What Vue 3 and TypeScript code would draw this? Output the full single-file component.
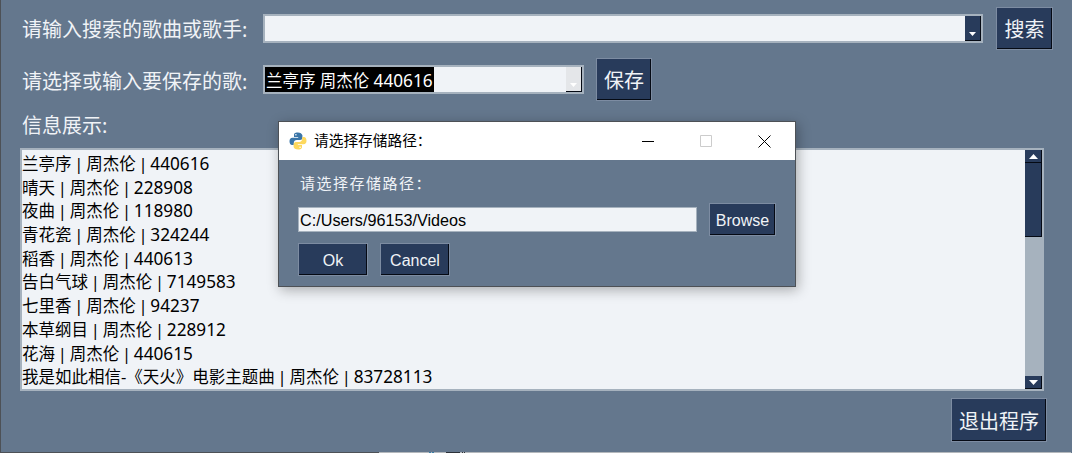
<script setup lang="ts">
interface Song {
  name: string
  singer: string
  id: string
}

const songs: Song[] = [
  { name: '兰亭序', singer: '周杰伦', id: '440616' },
  { name: '晴天', singer: '周杰伦', id: '228908' },
  { name: '夜曲', singer: '周杰伦', id: '118980' },
  { name: '青花瓷', singer: '周杰伦', id: '324244' },
  { name: '稻香', singer: '周杰伦', id: '440613' },
  { name: '告白气球', singer: '周杰伦', id: '7149583' },
  { name: '七里香', singer: '周杰伦', id: '94237' },
  { name: '本草纲目', singer: '周杰伦', id: '228912' },
  { name: '花海', singer: '周杰伦', id: '440615' },
  { name: '我是如此相信-《天火》电影主题曲', singer: '周杰伦', id: '83728113' },
]

// what shows of the window behind, along the bottom edge
const edgeParts = [
  { width: 379, color: '#4d5156' },
  { width: 50, color: '#b4b8bc' },
  { width: 2, color: '#3a7ea8' },
  { width: 1, color: '#b4b8bc' },
  { width: 2, color: '#3a7ea8' },
  { width: 12, color: '#b4b8bc' },
  { width: 14, color: '#2c3138' },
  { width: 2, color: '#b4b8bc' },
  { width: 1, color: '#2c3138' },
  { width: 1, color: '#b4b8bc' },
  { width: 1, color: '#2c3138' },
  { width: 606, color: '#b4b8bc' },
]
</script>

<template>
  <div class="window">
    <div class="row">
      <label class="label">请输入搜索的歌曲或歌手:</label>
      <div class="combo combo-wide">
        <div class="combo-field"></div>
        <div class="combo-arrow">
          <svg width="7" height="4" viewBox="0 0 7 4"><path d="M0 0h7L3.5 4z" fill="#fff" /></svg>
        </div>
      </div>
      <button class="btn btn-search">搜索</button>
    </div>

    <div class="row row-save">
      <label class="label">请选择或输入要保存的歌:</label>
      <div class="combo combo-short">
        <div class="combo-field"><span class="selected">兰亭序 周杰伦 <span class="num">440616</span></span></div>
        <div class="combo-arrow combo-arrow-plain">
          <svg width="7" height="4" viewBox="0 0 7 4"><path d="M0 0h7L3.5 4z" fill="#fff" /></svg>
        </div>
      </div>
      <button class="btn btn-save">保存</button>
    </div>

    <div class="caption">信息展示:</div>

    <div class="listbox">
      <div class="list-lines">
        <div v-for="song in songs" :key="song.id" class="line">
          {{ song.name }} | {{ song.singer }} | <span class="num">{{ song.id }}</span>
        </div>
      </div>
      <div class="scrollbar">
        <div class="scroll-btn">
          <svg width="9" height="5" viewBox="0 0 9 5"><path d="M4.500 0L9 5H0z" fill="#fff" /></svg>
        </div>
        <div class="scroll-thumb"></div>
        <div class="scroll-trough"></div>
        <div class="scroll-btn">
          <svg width="9" height="5" viewBox="0 0 9 5"><path d="M0 0h9L4.500 5z" fill="#fff" /></svg>
        </div>
      </div>
    </div>

    <div class="footer">
      <button class="btn btn-exit">退出程序</button>
    </div>

    <div class="edge">
      <div
        v-for="(part, i) in edgeParts"
        :key="i"
        :style="{ width: part.width + 'px', background: part.color }"
      ></div>
    </div>

    <!-- popup window -->
    <div class="dialog">
      <div class="titlebar">
        <svg class="py-logo" width="18" height="18" viewBox="0 0 18 18">
          <path d="M8.800 .5C5.400 .5 5 1.900 5 3.200V5h4.200v.8H3.300C1.600 5.800 .5 7 .5 9.300c0 2.300 1 3.700 2.600 3.700h1.700v-2c0-1.600 1.300-2.900 2.900-2.900h3.400c1.300 0 2.300-1 2.300-2.300V3.200C12.900 1.700 11.400 .5 8.800 .5z" fill="#3a75a8" />
          <path d="M9.200 17.500c3.400 0 3.800-1.400 3.800-2.700V13H8.800v-.8h5.900c1.700 0 2.800-1.200 2.800-3.500s-1-3.700-2.600-3.700h-1.700v2c0 1.600-1.300 2.900-2.900 2.900H6.900c-1.300 0-2.300 1-2.300 2.300v2.600c0 1.500 2 2.700 4.600 2.700z" fill="#fdd85c" />
          <circle cx="6.900" cy="2.800" r=".8" fill="#fff" />
          <circle cx="11.100" cy="15.200" r=".8" fill="#fff" />
        </svg>
        <span class="title-text">请选择存储路径：</span>
        <div class="title-controls">
          <svg width="13" height="13" viewBox="0 0 13 13"><path d="M0 6.500h12" stroke="#000" fill="none" /></svg>
          <svg width="13" height="13" viewBox="0 0 13 13"><path d="M.5.500h11v11H.5z" stroke="#ccc" fill="none" /></svg>
          <svg width="13" height="13" viewBox="0 0 13 13"><path d="M.5.500l12 12M12.500.500l-12 12" stroke="#000" fill="none" /></svg>
        </div>
      </div>
      <div class="dialog-body">
        <div class="dialog-label">请选择存储路径：</div>
        <div class="dialog-path">
          <div class="path-input">C:/Users/96153/Videos</div>
          <button class="btn btn-browse">Browse</button>
        </div>
        <div class="dialog-actions">
          <button class="btn btn-dialog">Ok</button>
          <button class="btn btn-dialog">Cancel</button>
        </div>
      </div>
    </div>
  </div>
</template>

<style>
html,
body {
  margin: 0;
  background: #64778d;
}
</style>

<style scoped>
.window {
  position: relative;
  box-sizing: border-box;
  display: flex;
  flex-direction: column;
  width: 1072px;
  height: 453px;
  padding-top: 7px;
  background: #64778d;
  border-left: 1px solid #4d5156;
  overflow: hidden;
  font-family: "Noto Sans", "Noto Sans CJK SC", sans-serif;
}

.row {
  display: flex;
  align-items: center;
  height: 43px;
  margin-bottom: 8px;
  padding-left: 21px;
}

.label {
  width: 241px;
  font-size: 20px;
  color: #f0f3f7;
  white-space: nowrap;
}

.row-save .label {
  padding-top: 2px;
}

.btn {
  box-sizing: border-box;
  background: #283b5b;
  color: #f0f3f7;
  border: 1px solid #7d8ca2;
  box-shadow: inset -1px -1px 0 #050a14;
  padding: 0;
  font-family: inherit;
}

.combo {
  box-sizing: border-box;
  display: flex;
  height: 29px;
  background: #f0f3f7;
  border: 2px solid #a6b2be;
}

.combo-wide {
  width: 720px;
}

.combo-short {
  width: 321px;
}

.combo-field {
  flex: 1;
  display: flex;
  align-items: stretch;
}

.selected {
  display: block;
  padding: 0 1px;
  background: #000;
  color: #fff;
  font-size: 16.5px;
  line-height: 27px;
  height: 25px;
  white-space: nowrap;
}

.num {
  font-size: 17.200px;
}

.combo-arrow {
  width: 16px;
  display: flex;
  align-items: flex-end;
  justify-content: center;
  padding-bottom: 4px;
  box-sizing: border-box;
  background: #283b5b;
  border-right: 1px solid #050a14;
  border-bottom: 1px solid #050a14;
}

.combo-arrow-plain {
  background: #e4e6e9;
}

.btn-search {
  width: 57px;
  height: 43px;
  margin-left: 13px;
  font-size: 20px;
}

.btn-save {
  width: 56px;
  height: 43px;
  margin-left: 12px;
  font-size: 20px;
}

.caption {
  height: 39px;
  padding-left: 21px;
  font-size: 20px;
  line-height: 34px;
  color: #f0f3f7;
}

.listbox {
  box-sizing: border-box;
  display: flex;
  width: 1024px;
  height: 243px;
  margin-left: 19px;
  background: #f0f3f7;
  border: 2px solid #a6b2be;
}

.list-lines {
  flex: 1;
  padding: 2px 0 0 0;
  font-size: 16.5px;
  line-height: 23.7px;
  word-spacing: -1.5px;
  color: #000;
  white-space: nowrap;
}

.line {
  height: 23.7px;
}

.scrollbar {
  width: 17px;
  display: flex;
  flex-direction: column;
  background: #a6b2be;
}

.scroll-btn {
  box-sizing: border-box;
  height: 13px;
  display: flex;
  align-items: center;
  justify-content: center;
  background: #283b5b;
  border-right: 1px solid #050a14;
  border-bottom: 1px solid #050a14;
}

.scroll-thumb {
  box-sizing: border-box;
  height: 74px;
  background: #283b5b;
  border-right: 1px solid #050a14;
  border-bottom: 1px solid #050a14;
}

.scroll-trough {
  flex: 1;
}

.footer {
  display: flex;
  justify-content: flex-end;
  padding: 7px 25px 0 0;
}

.btn-exit {
  width: 96px;
  height: 44px;
  font-size: 20px;
}

.edge {
  display: flex;
  flex: none;
  height: 1px;
  margin-top: auto;
  margin-left: -1px;
}

.dialog {
  position: absolute;
  left: 277px;
  top: 121px;
  width: 516px;
  height: 164px;
  background: #64778d;
  border: 1px solid #4d5156;
  box-shadow: 2px 3px 12px rgba(0, 0, 0, 0.3);
}

.titlebar {
  display: flex;
  align-items: center;
  height: 38px;
  padding-left: 10px;
  background: #fff;
}

.py-logo {
  flex: none;
}

.title-text {
  margin-left: 7px;
  margin-bottom: 3px;
  font-size: 14.700px;
  color: #000;
}

.title-controls {
  display: flex;
  gap: 45px;
  margin-left: auto;
  margin-right: 24px;
}

.dialog-body {
  padding: 13px 19px 0 19px;
}

.dialog-label {
  padding-left: 2px;
  font-size: 15px;
  letter-spacing: 1.5px;
  line-height: 20px;
  color: #f0f3f7;
}

.dialog-path {
  display: flex;
  align-items: center;
  margin-top: 10px;
}

.path-input {
  box-sizing: border-box;
  width: 399px;
  height: 25px;
  padding-left: 1px;
  background: #f0f3f7;
  border: 1px solid #a6b2be;
  font-family: "Liberation Sans", sans-serif;
  font-size: 16.200px;
  line-height: 25px;
  color: #000;
}

.btn-browse {
  width: 67px;
  height: 33px;
  margin-left: 12px;
  padding-top: 2px;
  font-family: "Liberation Sans", sans-serif;
  font-size: 16px;
}

.dialog-actions {
  display: flex;
  gap: 12px;
  margin-top: 7px;
}

.btn-dialog {
  width: 70px;
  height: 33px;
  padding-top: 2px;
  font-family: "Liberation Sans", sans-serif;
  font-size: 16px;
}
</style>
